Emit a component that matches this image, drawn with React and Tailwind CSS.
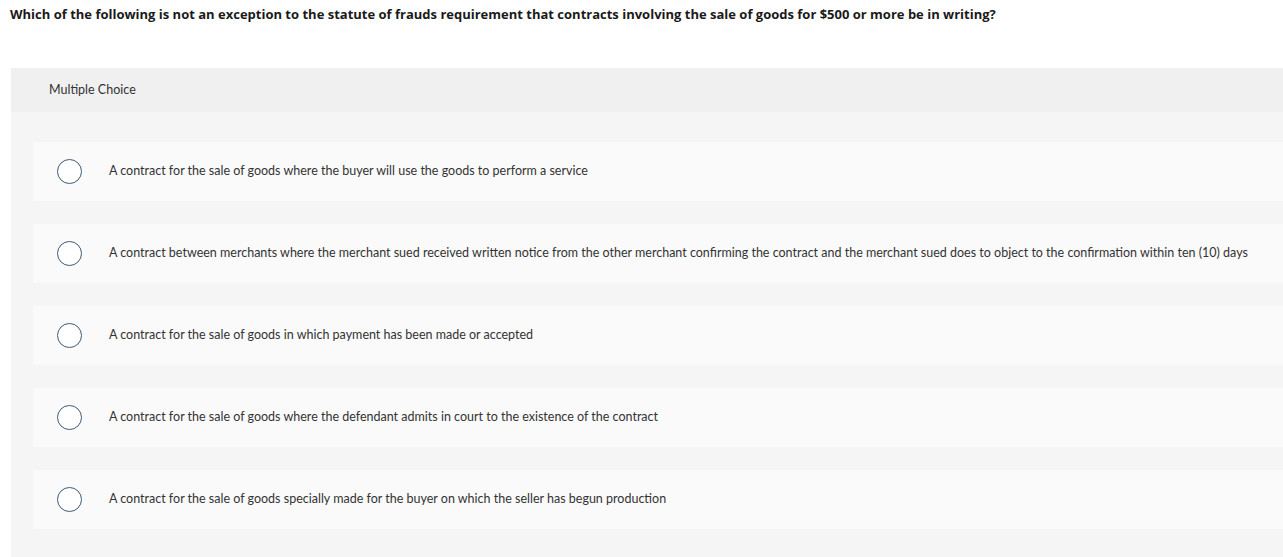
const options = [
  "A contract for the sale of goods where the buyer will use the goods to perform a service",
  "A contract between merchants where the merchant sued received written notice from the other merchant confirming the contract and the merchant sued does to object to the confirmation within ten (10) days",
  "A contract for the sale of goods in which payment has been made or accepted",
  "A contract for the sale of goods where the defendant admits in court to the existence of the contract",
  "A contract for the sale of goods specially made for the buyer on which the seller has begun production",
];

export default function App() {
  return (
    <div className="w-[1283px] h-[557px] overflow-hidden bg-white font-['Lato',sans-serif] text-[#222]">
      <h1 className="pl-[10px] pt-[5px] font-['Open_Sans',sans-serif] text-[13px] font-bold leading-[18px] text-[#1a1a1a]">
        Which of the following is not an exception to the statute of frauds requirement that contracts involving the sale of goods for $500 or more be in writing?
      </h1>

      <div className="ml-[11px] mt-[45px] bg-[#f5f5f5]">
        <div className="h-[44px] flex items-center pl-[38px] bg-[#f0f0f0] text-[12.5px] text-[#333]">
          Multiple Choice
        </div>
        <div className="flex flex-col gap-[23px] pt-[30px] pl-[22px] pb-[30px]">
          {options.map((o, i) => (
            <div key={i} className="h-[59px] bg-[#fafafa] flex items-center">
              <span className="ml-[24px] w-[25px] h-[25px] rounded-full border-[1.5px] border-[#3c5a78] bg-white shrink-0" />
              <span className="ml-[27px] text-[12.5px] text-[#333] whitespace-nowrap">{o}</span>
            </div>
          ))}
        </div>
      </div>
    </div>
  );
}
